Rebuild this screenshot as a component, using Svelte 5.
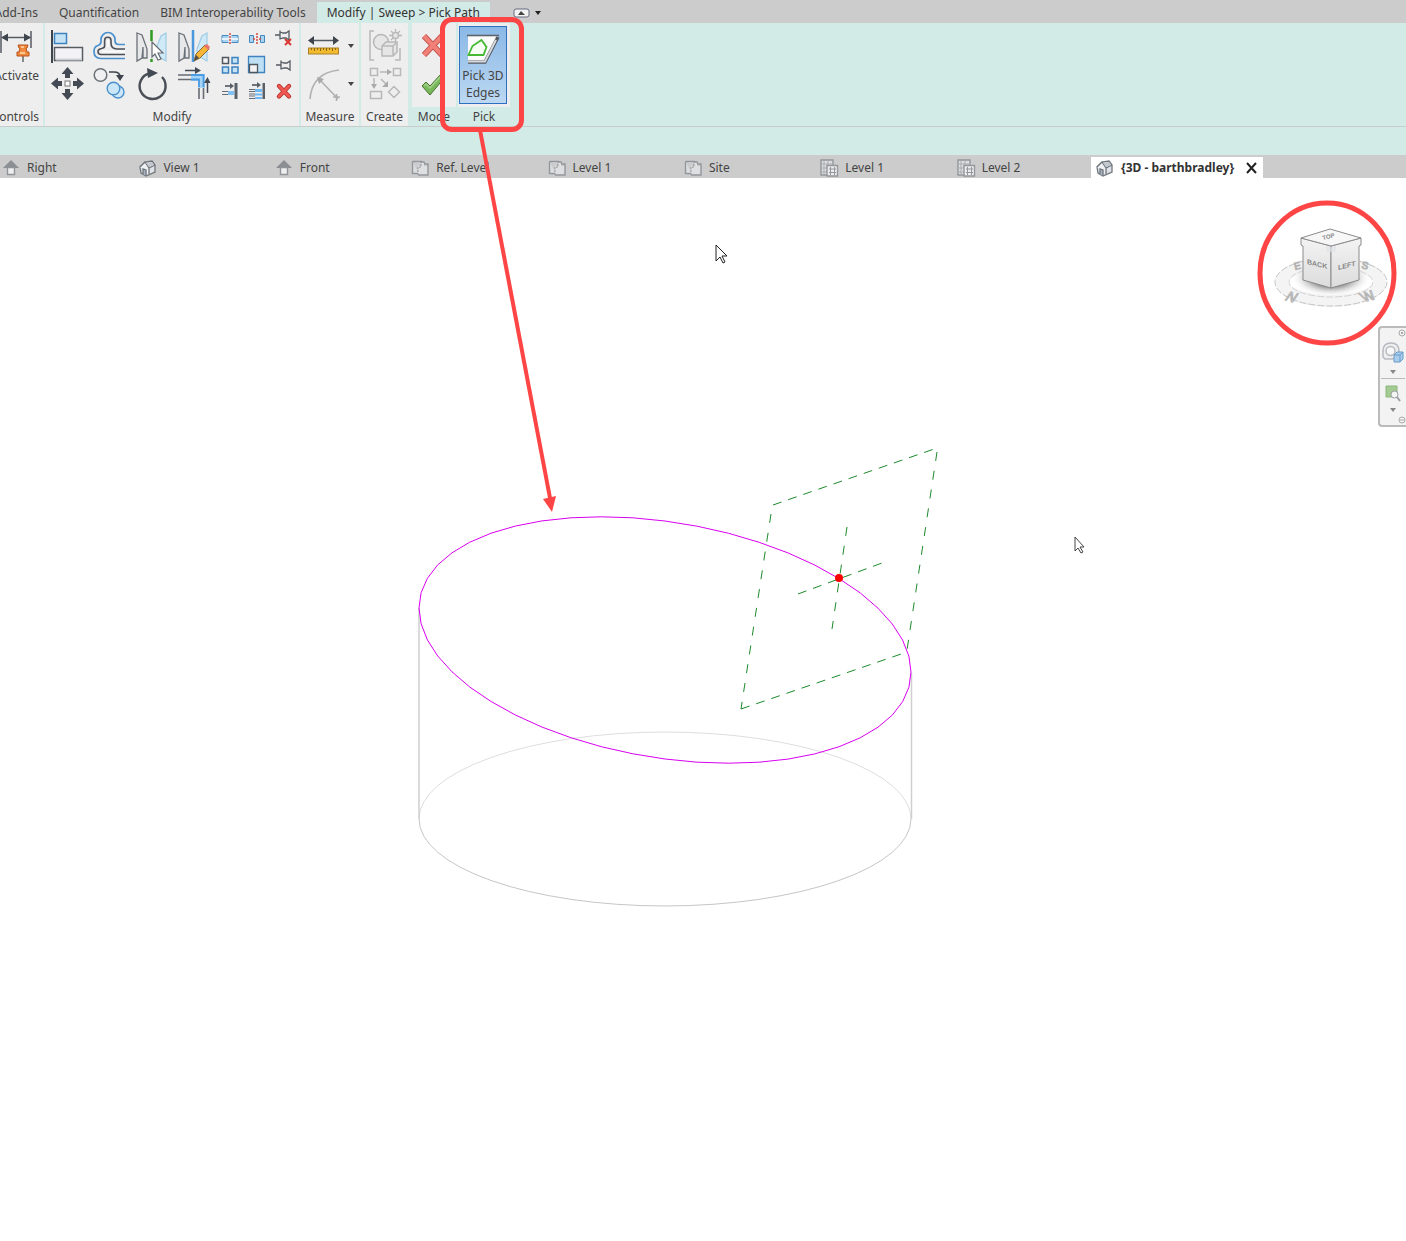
<script lang="ts">
  type Tool = { icon: string; label: string };

  const modifyTools: Tool[] = [
    { icon: 'align', label: 'Align' },
    { icon: 'offset', label: 'Offset' },
    { icon: 'mirrorPick', label: 'Mirror - Pick Axis' },
    { icon: 'mirrorDraw', label: 'Mirror - Draw Axis' },
    { icon: 'move', label: 'Move' },
    { icon: 'copy', label: 'Copy' },
    { icon: 'rotate', label: 'Rotate' },
    { icon: 'trim', label: 'Trim/Extend to Corner' }
  ];

  const smallTools: Tool[] = [
    { icon: 'split', label: 'Split Element' },
    { icon: 'splitGap', label: 'Split with Gap' },
    { icon: 'unpin', label: 'Unpin' },
    { icon: 'array', label: 'Array' },
    { icon: 'scale', label: 'Scale' },
    { icon: 'pin', label: 'Pin' },
    { icon: 'trimSingle', label: 'Trim/Extend Single Element' },
    { icon: 'trimMulti', label: 'Trim/Extend Multiple Elements' },
    { icon: 'remove', label: 'Delete' }
  ];

  const views = [
    { icon: 'elevation', label: 'Right' },
    { icon: 'house', label: 'View 1' },
    { icon: 'elevation', label: 'Front' },
    { icon: 'plan', label: 'Ref. Level' },
    { icon: 'plan', label: 'Level 1' },
    { icon: 'plan', label: 'Site' },
    { icon: 'sheet', label: 'Level 1' },
    { icon: 'sheet', label: 'Level 2' }
  ];

  const pinShape =
    '<path d="M2 10h5M7 5.500v9M7 7l3 1h3l3-2v9l-3-2h-3l-3 1" fill="#eee" stroke="#555b63" stroke-width="1.300"/>';

  // Big tools use a 34 unit box, small ones 20, view icons 18
  const icons: Record<string, string> = {
    dimension: '<path d="M-4 2v22M26 2v17M-2 8.500h27" stroke="#555b63" stroke-width="1.500"/><path d="M-4 8.500l7-4v8zM26 8.500l-7-4v8z" fill="#3f454d"/><path d="M18 27v6" stroke="#666" stroke-width="1.500"/><path d="M13 16h10l-1 3h-1l1 4h2v4H12v-4h2l1-4h-1z" fill="#f08a3c" stroke="#b9531a"/><path d="M16 18h3M15 24h5" stroke="#ffd9b0" stroke-width="1.500"/>',
    align: '<path d="M2 1v33" stroke="#3f454d" stroke-width="2"/><rect x="4.500" y="4.500" width="12" height="10" fill="#c5e3f5" stroke="#3d83c0" stroke-width="1.500"/><rect x="4.500" y="18.500" width="28" height="13" fill="#f3f3f5" stroke="#555b63" stroke-width="1.500"/><path d="M6 30.500h26" stroke="#cfd1d6" stroke-width="2"/>',
    offset: '<path d="M33 15.500h-6q-4 0-4-4v-1a7 7 0 0 0-14 0v2q0 3-3 4-4 1-4 6 0 7 7 7h24" fill="none" stroke="#4a90cc" stroke-width="1.700"/><path d="M33 20h-8q-6 0-6-6v-2.500a3.200 3.200 0 0 0-6.400 0V17q0 2-3 2.500-3.600 .5-3.600 3 0 3 3 3h24" fill="none" stroke="#4b5058" stroke-width="1.600"/><path d="M33 22.500H10M16 11v7" stroke="#fafafa" stroke-width="2"/>',
    mirrorPick: '<path d="M3 4l5 2 5 14v9h-4V18l-1 11-5 3z" fill="#e6e8ea" stroke="#6b7178" stroke-width="1.300"/><path d="M32 4l-5 3-5 13v8l5 1 5 3z" fill="#cfe9f7" stroke="#9fcbe5" stroke-width="1.200"/><path d="M17.500 1v11M17.500 30v3" stroke="#2f9b22" stroke-width="2.500"/><path d="M18 13v15l3-3 3 6 3-1-3-6h5z" fill="#fff" stroke="#666b72" stroke-width="1.200"/>',
    mirrorDraw: '<path d="M3 4l5 2 5 14v9h-4V18l-1 11-5 3z" fill="#e6e8ea" stroke="#6b7178" stroke-width="1.300"/><path d="M31 4l-5 3-5 13v8l5 1 5 3z" fill="#cfe9f7" stroke="#9fcbe5" stroke-width="1.200"/><path d="M17 1v32" stroke="#4a97dc" stroke-width="2.500"/><path d="M18 32l2-7 9-9q3 0 4 4l-9 9z" fill="#f5b638" stroke="#8a6a3a"/><path d="M28 17l4 4 2-3-3-3z" fill="#e9756c"/><path d="M18 32l2-6 3 3z" fill="#4b4b4b"/>',
    move: '<g fill="#444a53"><path d="M17.500 0l6 7h-3.500v4h-5V7h-3.500zM17.500 33l6-7h-3.500v-4h-5v4h-3.500zM1 16.500l7-6V14h4v5H8v3.500zM34 16.500l-7-6V14h-4v5h4v3.500z"/></g><rect x="15" y="14" width="5" height="5" fill="#fff" stroke="#777"/>',
    copy: '<circle cx="8.500" cy="8" r="6.300" fill="#f0f0f2" stroke="#6b7178" stroke-width="1.500"/><path d="M17 5h5q6 0 6 5" fill="none" stroke="#3f454d" stroke-width="1.700"/><path d="M24 8h8l-4 6z" fill="#3f454d"/><circle cx="26" cy="25" r="6" fill="#cbe6f6" stroke="#4a90cc" stroke-width="1.400"/><circle cx="21.500" cy="21.500" r="6.300" fill="#cbe6f6" stroke="#4a90cc" stroke-width="1.400"/>',
    rotate: '<path d="M28 10A13 13 0 1 1 15 6.500" fill="none" stroke="#4b5058" stroke-width="2.500"/><path d="M13 1l11 5-10 5z" fill="#444a53"/>',
    trim: '<path d="M2 8h14M2 12.500h14M23 21v11M27.500 21v11" stroke="#666c74" stroke-width="1.600"/><path d="M15 7h14v14h-7v-7h-7z" fill="#a6d3f5"/><path d="M15 12.500h8V20M15 8h12.500v12" fill="none" stroke="#4a9be2" stroke-width="1.800"/><path d="M9 3.500h12M31.500 26V14" stroke="#444a53" stroke-width="1.500"/><path d="M19 0l6 3.500L19 7zM28 16l3.500-6 3 6z" fill="#444a53"/>',
    split: '<path d="M2 6.500h16v7H2z" fill="#a8d3f2" stroke="#4588bd"/><path d="M2 10h16" stroke="#e4f3fc" stroke-width="2"/><path d="M10 4v12" stroke="#eee" stroke-width="3"/><path d="M10 4v12" stroke="#d34b45" stroke-width="1.500" stroke-dasharray="2 1"/>',
    splitGap: '<path d="M2.500 6.500h4v7h-4zM13.500 6.500h4v7h-4z" fill="#a8d3f2" stroke="#4588bd"/><path d="M10 4v12M6 10h2M12 10h2" stroke="#d34b45" stroke-width="1.500" stroke-dasharray="2 1"/>',
    unpin: '<g transform="translate(-1 -4)">' + pinShape + '</g><path d="M11 10l6 6M17 10l-6 6" stroke="#d9362f" stroke-width="2"/>',
    pin: pinShape,
    array: '<path d="M2.500 2.500h6v6h-6z" fill="#f5f5f7" stroke="#50565e" stroke-width="1.500"/><path d="M12 2.500h6v6h-6zM2.500 12h6v6h-6zM12 12h6v6h-6z" fill="#c5e3f5" stroke="#3d83c0" stroke-width="1.500"/>',
    scale: '<path d="M1.500 1.500h16v16h-16z" fill="#bfe0f4" stroke="#3d83c0" stroke-width="1.300"/><path d="M2.500 9.500h8v8h-8z" fill="#f3f3f5" stroke="#50565e" stroke-width="1.300"/>',
    trimSingle: '<path d="M5 5h7" stroke="#444a53" stroke-width="1.500"/><path d="M10 2l4 3-4 3zM14.500 2h3v16h-3z" fill="#596068"/><path d="M2 10.500h6M2 13.500h6" stroke="#666c74"/><path d="M8 10h6v4H8z" fill="#7fc0f5"/>',
    trimMulti: '<path d="M5 4h7" stroke="#444a53" stroke-width="1.500"/><path d="M10 1l4 3-4 3zM15.500 2h2.500v16h-2.500z" fill="#596068"/><path d="M2 8.500h6M2 10.500h6M2 13h6M2 15h6M2 17.500h6" stroke="#666c74"/><path d="M8 8h7v3H8zM8 12.500h7v2H8zM8 16h7v2H8z" fill="#6fb8f3"/>',
    remove: '<path d="M5 5l10 10.500M15 5L5 15.500" stroke="#b5302b" stroke-width="4.400" stroke-linecap="round"/><path d="M5 5l10 10.500M15 5L5 15.500" stroke="#ee5850" stroke-width="2.800" stroke-linecap="round"/>',
    ruler: '<path d="M5 11.500h25" stroke="#555b63" stroke-width="1.500"/><path d="M2 11.500l6-4.500v9zM33 11.500L27 7v9z" fill="#3f454d"/><rect x="2.500" y="19" width="30" height="6" fill="#f2bb2f" stroke="#a9812a"/><path d="M5.500 19v2M8.500 19v3M11.500 19v2M14.500 19v3M17.500 19v2M20.500 19v3M23.500 19v2M26.500 19v3M29.500 19v2" stroke="#8a6416"/>',
    arc: '<path d="M4 32Q6 6 33 3M14 13l18 19M27 30h7M30.500 27v7" fill="none" stroke="#b0b0b0" stroke-width="1.600"/><path d="M11 10l7 2-5 5z" fill="#aaa"/>',
    group: '<g fill="#e6e6e6" stroke="#b8b8b8" stroke-width="1.500"><path d="M6 2H2v29h4M27 31h5V19" fill="none"/><circle cx="13" cy="13" r="7.500"/><path d="M14 17l4-4h11v10l-4 4H14z"/><path d="M14 17h11v10M25 17l4-4"/><circle cx="27.500" cy="6.500" r="3"/></g><path d="M27.500 0v3M27.500 10v3M21 6.500h3M31 6.500h3M23 2l2 2M32 2l-2 2M23 11l2-2" stroke="#b8b8b8" stroke-width="1.300"/>',
    similar: '<g fill="#eee" stroke="#b8b8b8" stroke-width="1.500"><path d="M2.500 1.500h7v7h-7zM25.500 1.500h7v7h-7zM2.500 24.500h11v7h-11zM26 19.500l5.500 5.500-5.500 5.500-5.500-5.500z"/><path d="M12 5h10M6 11v9M13 12l6 6" fill="none"/></g><path d="M19 2l5 3-5 3zM3 17h6l-3 5zM20 14v6h-6z" fill="#aaa"/>',
    cancel: '<path d="M7 7l18 19M25 7L7 26" stroke="#c44f49" stroke-width="6"/><path d="M7 7l18 19M25 7L7 26" stroke="#f08078" stroke-width="4"/>',
    finish: '<path d="M5 19l4-4 4 4L24 7l4 3-15 18z" fill="#79b85b" stroke="#46732f"/><path d="M7 19l2-2 4 4L24 9" fill="none" stroke="#a3d18b" stroke-width="1.500"/>',
    edges: '<path d="M2 3h30L20 29H2z" fill="#fbfbfb"/><path d="M2 29h17L32 4" fill="none" stroke="#555b63" stroke-width="3.500"/><path d="M2 28.500h17L30 7" fill="none" stroke="#d8dadd" stroke-width="2"/><path d="M1 2.500h32" stroke="#5c636b" stroke-width="1.600"/><path d="M2.500 22l4-9 9-6 5 7-3 8z" fill="#f7fff4" stroke="#45b934" stroke-width="1.800"/>',
    elevation: '<path d="M9 1l8 8H1z" fill="#8b8e92"/><path d="M5.500 8.500h7v7h-7z" fill="#eee" stroke="#909398" stroke-width="1.400"/>',
    house: '<path d="M2 8l5-5 7-1 3 4v7l-9 4-5-3z" fill="#dfe2e6" stroke="#70767d" stroke-width="1.300"/><path d="M2 8l5-5 4 6v7" fill="#eef0f2" stroke="#70767d" stroke-width="1.300"/><path d="M11 9l6-3M5 15v-5l3 1v6" fill="#a7b4c4" stroke="#70767d" stroke-width="1.300"/><path d="M8 4l6-1 2 3-5 2z" fill="#c3c8ce"/>',
    plan: '<path d="M1.500 2.500h9v3h3M1.500 2.500v12h6" fill="#dcdddf" stroke="#93979b" stroke-width="1.400"/><path d="M7 7h3V3h3v4h4v9H7z" fill="#dedfe1"/><path d="M10 3h3l1 2h3v11H7" stroke="#93979b" stroke-width="1.400" fill="none"/><path d="M7 16V8h3V3" stroke="#93979b" stroke-dasharray="2 1"/>',
    sheet: '<path d="M1 1h12v15H1z" fill="#dcdddf" stroke="#93979b" stroke-width="1.400"/><path d="M4 2v13M8 2v5M1 5h11M1 9h6M1 13h6" stroke="#aaadb0"/><path d="M7 6.500h10.500v10.500H7z" fill="#ececed" stroke="#93979b" stroke-width="1.400"/><path d="M9 10h7M9 13.500h7M10.500 8v8M14.500 8v8" stroke="#93979b"/>'
  };

  // Rim of the slanted cut, as the viewport facets it
  const rim = Array.from({ length: 48 }, (_, i) => {
    const t = (i / 48) * Math.PI * 2;
    const x = 665 + 246 * Math.cos(t);
    const y = 462 + 32 * Math.cos(t) + 119 * Math.sin(t);
    return `${x.toFixed(1)},${y.toFixed(1)}`;
  }).join(' ');
</script>

{#snippet icon(name: string, size: number)}
  <svg width={size} height={size} viewBox="0 0 {size} {size}" fill="none" aria-hidden="true">{@html icons[name]}</svg>
{/snippet}

{#snippet caret()}
  <svg width="6" height="4" viewBox="0 0 6 4" aria-hidden="true"><path d="M0 0h6L3 4z" fill="currentColor" /></svg>
{/snippet}

<div class="app">
  <nav class="ribbon-tabs">
    <button class="addins">Add-Ins</button>
    <button>Quantification</button>
    <button>BIM Interoperability Tools</button>
    <button class="current">Modify | Sweep &gt; Pick Path</button>
    <button class="minimize" aria-label="Minimize ribbon">
      <svg width="28" height="12" viewBox="0 0 28 12" aria-hidden="true">
        <rect x="1" y="2" width="15" height="8" rx="2" fill="#f2f2f2" stroke="#666c80" />
        <path d="M5 8l3-4 4 4z" fill="#444" />
        <path d="M22 4h6l-3 4z" fill="#222" />
      </svg>
    </button>
  </nav>

  <div class="ribbon">
    <section class="panel controls">
      <button class="activate">
        {@render icon('dimension', 34)}
        <span>Activate</span>
      </button>
      <h2>Controls</h2>
    </section>

    <section class="panel modify">
      <div class="body">
        <div class="big-grid">
          {#each modifyTools as tool}
            <button aria-label={tool.label}>{@render icon(tool.icon, 34)}</button>
          {/each}
        </div>
        <div class="small-grid">
          {#each smallTools as tool}
            <button aria-label={tool.label}>{@render icon(tool.icon, 20)}</button>
          {/each}
        </div>
      </div>
      <h2>Modify</h2>
    </section>

    <section class="panel measure">
      <div class="stack">
        <button aria-label="Measure">{@render icon('ruler', 34)}{@render caret()}</button>
        <button aria-label="Dimension">{@render icon('arc', 34)}{@render caret()}</button>
      </div>
      <h2>Measure</h2>
    </section>

    <section class="panel create">
      <div class="stack">
        <button aria-label="Create group">{@render icon('group', 34)}</button>
        <button aria-label="Create similar">{@render icon('similar', 34)}</button>
      </div>
      <h2>Create</h2>
    </section>

    <section class="panel mode">
      <div class="stack">
        <button aria-label="Cancel">{@render icon('cancel', 34)}</button>
        <button aria-label="Finish">{@render icon('finish', 34)}</button>
      </div>
      <h2>Mode</h2>
    </section>

    <section class="panel pick">
      <button class="pick-edges">
        {@render icon('edges', 34)}
        <span>Pick 3D Edges</span>
      </button>
      <h2>Pick</h2>
      <div class="highlight"></div>
      <svg class="arrow" width="100" height="390" viewBox="0 0 100 390" aria-hidden="true">
        <path d="M20 7L90 375" stroke="#fe4545" stroke-width="4" />
        <path d="M83 376l13-3-4 16z" fill="#fe4545" />
      </svg>
    </section>
  </div>

  <div class="options"></div>

  <nav class="view-tabs">
    {#each views as view}
      <button>{@render icon(view.icon, 18)}<span>{view.label}</span></button>
    {/each}
    <div class="open-view">
      <button class="open-name">{@render icon('house', 18)}<span>&lbrace;3D - barthbradley&rbrace;</span></button>
      <button class="close" aria-label="Close view">
        <svg width="11" height="12" viewBox="0 0 11 12" aria-hidden="true">
          <path d="M1 1l9 10M10 1L1 11" stroke="#222" stroke-width="2" />
        </svg>
      </button>
    </div>
  </nav>

  <main class="viewport">
    <svg class="model" viewBox="0 0 1406 1063" preserveAspectRatio="xMidYMin meet" fill="none">
      <path d="M419 641a246 87 0 0 1 492 0" stroke="#dedede" />
      <path d="M419 641a246 87 0 0 0 492 0" stroke="#c6c6c6" />
      <path d="M419 430v211M911.500 495v146" stroke="#cfcfcf" stroke-width="1.500" />
      <g stroke="#1c8a2c" stroke-dasharray="9 7">
        <path d="M773 327L937 270" />
        <path d="M937 274L907 472" stroke-dasharray="9 10" />
        <path d="M741 531L907 474" />
        <path d="M771 336L741 531" stroke-dasharray="9 10" />
        <path d="M847 349L832 451" stroke-dasharray="9 10" />
        <path d="M798 416L882 385" />
      </g>
      <polygon points={rim} stroke="#d800f0" />
      <circle cx="839" cy="400" r="4" fill="#f00" />
      <g fill="#fff" stroke="#222">
        <path d="M716 67v16l4-4 3 6 2-1-3-6h5z" />
        <path d="M1075 359v14l3-3 3 5 2-1-3-5h4z" stroke="#444" />
      </g>
    </svg>

    <svg class="cube" width="145" height="150" viewBox="0 0 145 150">
      <defs>
        <radialGradient id="shadow">
          <stop offset="0.4" stop-color="#777" />
          <stop offset="1" stop-color="#fff" stop-opacity="0" />
        </radialGradient>
        <linearGradient id="face" x2="0" y2="1">
          <stop offset="0" stop-color="#f3f3f3" />
          <stop offset="1" stop-color="#dcdcdc" />
        </linearGradient>
      </defs>
      <ellipse cx="76" cy="84" rx="49" ry="19" fill="none" stroke="#f4f4f4" stroke-width="12" />
      <ellipse cx="76" cy="84" rx="56" ry="24" fill="none" stroke="#c4c4c4" stroke-dasharray="7 2" />
      <ellipse cx="76" cy="84" rx="42" ry="15" fill="none" stroke="#d2d2d2" stroke-dasharray="7 2" />
      <g class="compass">
        <text x="0" y="0" transform="translate(29 102) rotate(14) skewX(-20)">N</text>
        <text x="0" y="0" transform="translate(109 104) rotate(-14) skewX(20)">W</text>
        <text x="0" y="0" transform="translate(40 72) rotate(-14)" class="far">E</text>
        <text x="0" y="0" transform="translate(106 70) rotate(14)" class="far">S</text>
      </g>
      <ellipse cx="76" cy="80" rx="40" ry="19" fill="url(#shadow)" />
      <path d="M46 40l30 8v42l-28-8V48l-2-1z" fill="url(#face)" stroke="#8b8b8b" />
      <path d="M106 40l-30 8v42l28-8V48l2-1z" fill="url(#face)" stroke="#8b8b8b" />
      <path d="M75 31l31 9-30 8-30-8z" fill="#f7f7f7" stroke="#8b8b8b" />
      <path d="M71 48l5 1 5-1v6h-10z" fill="#dfe2e8" fill-opacity="0.700" />
      <g class="faces">
        <text x="0" y="0" transform="translate(52 66) skewY(14)">BACK</text>
        <text x="0" y="0" transform="translate(83 72) skewY(-14)">LEFT</text>
        <text x="0" y="0" transform="translate(68 42) rotate(-14)" class="top">TOP</text>
      </g>
      <ellipse cx="72" cy="75" rx="67" ry="70" fill="none" stroke="#fe4545" stroke-width="5" />
    </svg>

    <aside class="navbar">
      <button class="mini" aria-label="Close navigation bar">
        <svg width="8" height="8" viewBox="0 0 8 8" fill="none" stroke="#aaa"><circle cx="4" cy="4" r="3" /><path d="M3 3l2 2M5 3L3 5" /></svg>
      </button>
      <button aria-label="Steering wheel">
        <svg width="24" height="24" viewBox="0 0 24 24" fill="none">
          <path d="M10 18H4l-2-2V10Q2 2 10 2t8 8-8 8z" fill="#eee" stroke="#b7bac0" stroke-width="1.500" />
          <circle cx="9.500" cy="10" r="4.500" fill="#f7f7f7" stroke="#b7bac0" stroke-width="1.500" />
          <path d="M13 14l3-3h6v7l-3 3h-6z" fill="#a9cdec" stroke="#6a9cc9" />
          <path d="M13 14h6v7M19 14l3-3" stroke="#6a9cc9" />
        </svg>
      </button>
      {@render caret()}
      <hr />
      <button aria-label="Zoom">
        <svg width="20" height="20" viewBox="0 0 20 20" fill="none">
          <path d="M3 3h11v11H3z" fill="#a3cb92" stroke="#8ab87c" />
          <circle cx="11.500" cy="11.500" r="3.500" fill="#f4f6f6" stroke="#999fa5" />
          <path d="M14 14l3 4" stroke="#999fa5" stroke-width="2" />
        </svg>
      </button>
      {@render caret()}
      <button class="mini" aria-label="Navigation bar options">
        <svg width="8" height="8" viewBox="0 0 8 8" fill="none" stroke="#aaa"><circle cx="4" cy="4" r="3" /><path d="M2 4h4" /></svg>
      </button>
    </aside>
  </main>
</div>

<style>
  :global(body) {
    margin: 0;
  }

  .app {
    display: flex;
    flex-direction: column;
    min-height: 100vh;
    overflow: hidden;
    background: #fff;
    color: #444;
    font: 12px/17px "Noto Sans", "Open Sans", sans-serif;
  }

  button {
    display: flex;
    align-items: center;
    justify-content: center;
    padding: 0;
    border: 0;
    background: none;
    color: inherit;
    font: inherit;
    white-space: nowrap;
  }

  svg {
    display: block;
    flex: none;
    overflow: visible;
  }

  /* Ribbon tabs */
  .ribbon-tabs {
    display: flex;
    align-items: flex-end;
    gap: 21px;
    height: 23px;
    background: #ccc;
  }

  .ribbon-tabs button {
    height: 21px;
  }

  .ribbon-tabs .addins {
    width: 38px;
    justify-content: flex-end;
  }

  .ribbon-tabs .current {
    margin: 0 2px 0 -10px;
    padding: 0 10px;
    background: #d3ebe7;
    color: #333;
  }

  /* Ribbon */
  .ribbon {
    display: flex;
    gap: 2px;
    height: 103px;
    background: #d3ebe7;
    border-bottom: 1px solid #c8cccb;
  }

  .panel {
    display: flex;
    flex-direction: column;
    justify-content: space-between;
    box-sizing: border-box;
    padding-top: 6px;
    background: #eee;
  }

  h2 {
    margin: 0;
    font-size: 12px;
    font-weight: 400;
    line-height: 19px;
    text-align: center;
  }

  .controls {
    width: 43px;
    align-items: flex-end;
    padding-right: 4px;
  }

  .activate {
    flex-direction: column;
    align-items: flex-end;
    gap: 4px;
  }

  .body {
    display: flex;
    gap: 10px;
    padding: 0 5px;
  }

  .modify {
    width: 254px;
  }

  .big-grid {
    display: grid;
    grid-template-columns: repeat(4, 34px);
    gap: 4px 8px;
  }

  .small-grid {
    display: grid;
    grid-template-columns: repeat(3, 20px);
    gap: 6px 7px;
  }

  .stack {
    display: flex;
    flex-direction: column;
    gap: 4px;
  }

  .stack button {
    gap: 8px;
  }

  .measure {
    width: 58px;
  }

  .create {
    width: 47px;
  }

  .mode {
    width: 44px;
    margin-left: 2px;
  }

  .pick {
    position: relative;
    width: 52px;
    padding-top: 3px;
  }

  .mode h2,
  .pick h2 {
    background: #d3ebe7;
  }

  .pick-edges {
    box-sizing: border-box;
    flex-direction: column;
    height: 78px;
    margin: 0 3px 0 1px;
    padding-top: 4px;
    border: 1px solid #2d6fc0;
    background: linear-gradient(#8ab8e6, #bcd8f2);
    white-space: normal;
  }

  .highlight {
    position: absolute;
    z-index: 2;
    top: -6px;
    left: -18px;
    width: 74px;
    height: 105px;
    border: 5px solid #fe4545;
    border-radius: 12px;
  }

  .arrow {
    position: absolute;
    z-index: 2;
    top: 100px;
    left: 2px;
    pointer-events: none;
  }

  .options {
    height: 28px;
    background: #d3ebe7;
  }

  /* View tabs */
  .view-tabs {
    display: flex;
    height: 23px;
    padding-right: 143px;
    background: #ccc;
  }

  .view-tabs > button {
    flex: 1 1 0;
    justify-content: flex-start;
    gap: 7px;
    padding: 2px 0 0 2px;
  }

  .open-view {
    display: flex;
    align-items: center;
    justify-content: space-between;
    box-sizing: border-box;
    width: 172px;
    margin-top: 2px;
    padding: 0 6px 0 4px;
    background: #fff;
    color: #333;
    font-weight: 700;
  }

  .open-name {
    gap: 8px;
  }

  /* Drawing area */
  .viewport {
    position: relative;
    flex: 1;
  }

  .model {
    width: 100%;
  }

  .cube {
    position: absolute;
    top: 20px;
    right: 6px;
  }

  .faces text {
    fill: #888;
    font: 700 7px "Liberation Sans Narrow", "Liberation Sans", sans-serif;
  }

  .faces .top {
    font-size: 6px;
  }

  .compass text {
    fill: #eee;
    stroke: #b4b4b4;
    font: 14px "Liberation Sans", sans-serif;
  }

  .compass .far {
    font-size: 10px;
  }

  .navbar {
    position: absolute;
    top: 148px;
    right: 0;
    display: flex;
    flex-direction: column;
    align-items: center;
    justify-content: space-between;
    box-sizing: border-box;
    width: 28px;
    height: 101px;
    padding: 1px 0;
    border: 2px solid #bbb;
    border-right: 0;
    border-radius: 4px 0 0 4px;
    background: #f3f3f3;
    color: #888;
  }

  .navbar .mini {
    align-self: flex-end;
  }

  .navbar hr {
    width: 24px;
    margin: 0;
    border: 0;
    border-top: 1px solid #bbb;
  }
</style>
